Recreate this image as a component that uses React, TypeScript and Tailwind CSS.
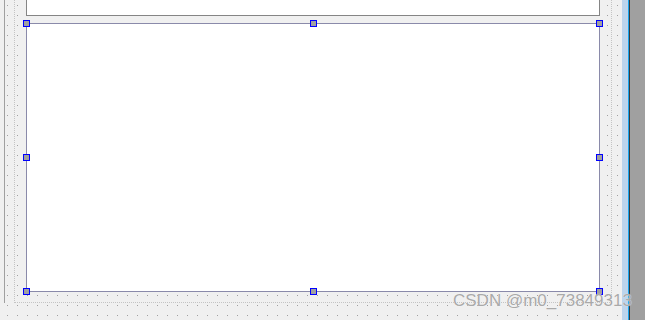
function Handle() {
  return <div className="w-[7px] h-[7px] shrink-0 border border-solid border-[#0000ff] bg-[#a0a0a0]" />;
}

export default function App() {
  return (
    <div className="relative flex w-[645px] h-[320px] overflow-hidden bg-[#f0f0f0] font-['Liberation_Sans',Arial,sans-serif]">
      {/* designer canvas with dot grid */}
      <div className="w-[622px] h-full pl-[4px] bg-[conic-gradient(at_1px_1px,transparent_75%,#a0a0a0_0)] bg-[length:10px_10px] bg-[position:7px_5px]">
        <div className="w-[608px] h-[303px] border-l border-[#a0a0a0] pl-[9px]">
          <div className="w-[598px] h-full border-l border-r border-b border-dotted border-[#c4c4c4] pl-[11px]">
            <div className="w-[574px] h-[16px] bg-white border border-t-0 border-[#858585]" />
            <div className="relative mt-[7px] w-[574px] h-[269px] bg-white border border-[#8a8aaa]">
              {/* selection handles */}
              <div className="absolute -inset-[4px] flex flex-col justify-between">
                <div className="flex justify-between">
                  <Handle />
                  <Handle />
                  <Handle />
                </div>
                <div className="flex justify-between">
                  <Handle />
                  <Handle />
                </div>
                <div className="flex justify-between">
                  <Handle />
                  <Handle />
                  <Handle />
                </div>
              </div>
            </div>
          </div>
        </div>
      </div>
      {/* window edge */}
      <div className="w-[6px] h-full bg-[#bcd4ec]" />
      <div className="w-px h-full bg-[#18a4ec]" />
      <div className="w-px h-full bg-[#3c3c3c]" />
      <div className="flex-1 h-full bg-[#a0a0a0]" />
      {/* watermark */}
      <div className="absolute left-[453px] top-[291px] text-[17px] leading-[20px] text-[#a9a9a9] [text-shadow:0_0_1px_#ffffff] whitespace-nowrap">
        CSDN @m0_73849313
      </div>
    </div>
  );
}
